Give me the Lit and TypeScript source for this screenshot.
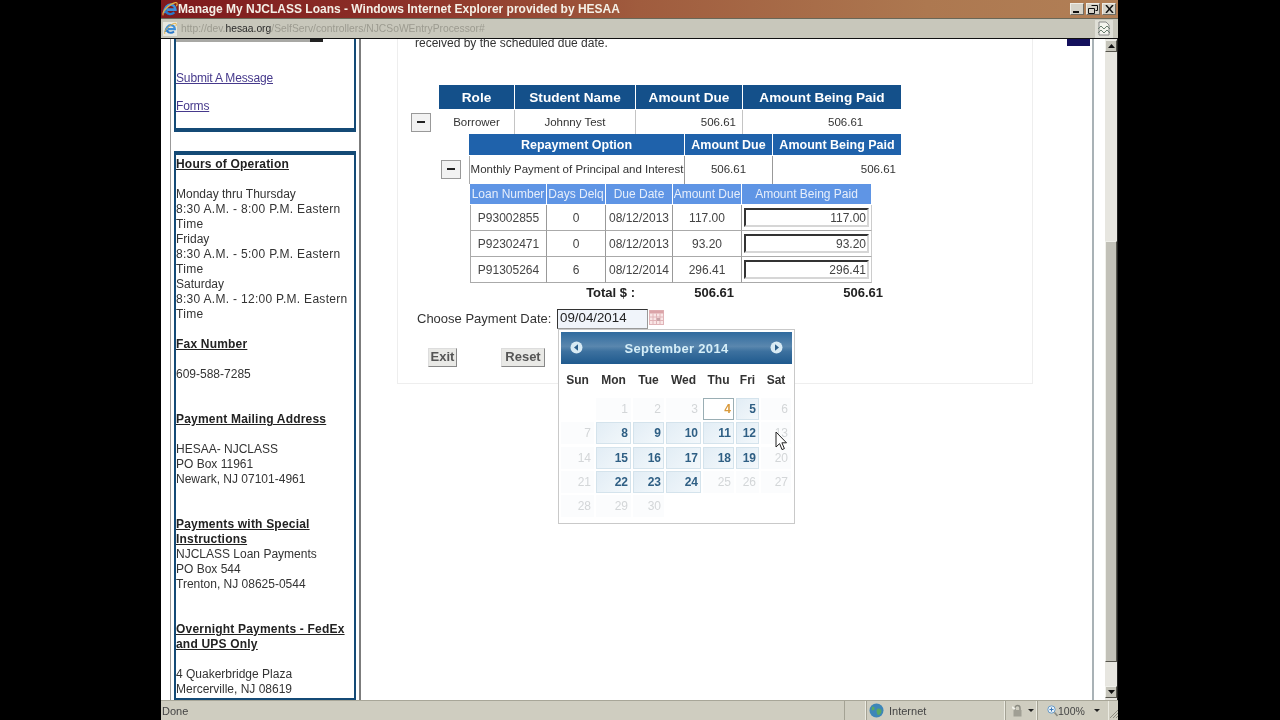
import { LitElement, css, html } from 'lit';
import { customElement } from 'lit/decorators.js';

const LOANS = [
  { no: 'P93002855', days: '0', date: '08/12/2013', due: '117.00' },
  { no: 'P92302471', days: '0', date: '08/12/2013', due: '93.20' },
  { no: 'P91305264', days: '6', date: '08/12/2014', due: '296.41' },
];

// off = greyed out day
const DAYS: { d: number; off?: boolean; today?: boolean }[] = [];
for (let d = 1; d <= 30; d++) {
  const open = d === 4 || d === 5 || (d >= 8 && d <= 12) || (d >= 15 && d <= 19) || (d >= 22 && d <= 24);
  DAYS.push({ d, off: !open, today: d === 4 });
}

const ieLogo = (size: number) => html`
  <svg width=${size} height=${size} viewBox="0 0 16 16">
    <path d="M3 11.5C3 6.5 6.5 3.5 9 3.5s4.5 2 4.5 4.7H5.2" fill="none" stroke="#3f8fd8" stroke-width="2.6"/>
    <path d="M5 9c0 3.4 4.6 4.4 7.6 1.8" fill="none" stroke="#2b78c8" stroke-width="2.2"/>
    <path d="M2 13.5C.6 10 8 2.5 13.5 1.5c2.2-.4 2 1.7 1 3.4" fill="none" stroke="#e8b040" stroke-width="1.1"/>
  </svg>
`;

@customElement('app-root')
export class AppRoot extends LitElement {
  static override styles = css`
    :host {
      display: block;
      width: 1280px;
      height: 720px;
      background: #000;
      overflow: hidden;
      font-family: 'Liberation Sans', Arial, sans-serif;
      font-size: 12px;
      color: #333;
    }
    .window {
      width: 957px;
      height: 720px;
      margin-left: 161px;
      display: flex;
      flex-direction: column;
      background: #fff;
      filter: blur(0.3px);
    }

    /* title bar */
    .title {
      height: 18px;
      display: flex;
      align-items: center;
      background: linear-gradient(90deg, #7e1a1c 0%, #8c3028 25%, #a05c3e 50%, #ad7850 80%, #b17f56 100%);
      color: #f4efe6;
      font-weight: bold;
      font-size: 12px;
      white-space: nowrap;
    }
    .title .logo {
      width: 17px;
      height: 17px;
      display: flex;
    }
    .title .caption {
      flex: 1;
    }
    .winbtn {
      width: 14px;
      height: 12px;
      margin-right: 2px;
      background: #d6d3c9;
      border: 1px solid;
      border-color: #eeece6 #6f6d64 #6f6d64 #eeece6;
      box-sizing: border-box;
      display: flex;
      align-items: center;
      justify-content: center;
    }

    /* address bar */
    .address {
      height: 21px;
      box-sizing: border-box;
      display: flex;
      align-items: center;
      background: #c8c7bb;
      border-top: 1px solid #6a6858;
      border-bottom: 1px solid #111;
      font-size: 10.3px;
      color: #9c9b90;
      white-space: nowrap;
    }
    .address .fav {
      width: 14px;
      height: 14px;
      margin: 0 4px 0 2px;
      background: #e8e8e0;
      display: flex;
    }
    .address b {
      font-weight: normal;
      color: #2a2a2a;
    }
    .address .url {
      flex: 1;
    }
    .address .compat {
      width: 18px;
      height: 18px;
      margin-right: 5px;
      background: #dfdfd6;
      display: flex;
      align-items: center;
      justify-content: center;
    }

    /* page area */
    .page {
      flex: 1;
      min-height: 0;
      display: flex;
      background: #fff;
      overflow: hidden;
    }
    .side {
      width: 200px;
      box-sizing: border-box;
      padding-left: 13px;
      border-right: 2px solid #7c7c7c;
      position: relative;
      flex: none;
    }
    .side .rule {
      position: absolute;
      left: 9px;
      top: 0;
      bottom: 0;
      width: 1px;
      background: #999;
    }
    .box {
      width: 182px;
      box-sizing: border-box;
      border: 2px solid #144a76;
      line-height: 15px;
      color: #333;
    }
    .box.first {
      height: 93px;
      border-top: 0;
      border-bottom-width: 4px;
    }
    .box.second {
      margin-top: 19px;
      height: 549px;
      border-top-width: 4px;
      border-bottom-width: 2px;
      padding-top: 2px;
      overflow: hidden;
    }
    .cutoff {
      display: flex;
      height: 3px;
      margin-bottom: 29px;
    }
    .cutoff i {
      width: 134px;
      background: #a8a8a4;
    }
    .cutoff u {
      width: 13px;
      background: #222;
    }
    .box a {
      color: #46398c;
      text-decoration: underline;
      display: block;
      margin-bottom: 13px;
      letter-spacing: -0.15px;
    }
    .box h4 {
      margin: 0;
      font-size: 12px;
      line-height: 15px;
      font-weight: bold;
      text-decoration: underline;
      letter-spacing: 0.2px;
      color: #222;
    }
    .box p {
      margin: 0;
    }
    .box p.hours {
      letter-spacing: 0.3px;
    }
    .box .gap1 {
      margin-top: 15px;
    }
    .box .gap2 {
      margin-top: 30px;
    }

    .main {
      flex: 1;
      display: flex;
      align-items: flex-start;
      padding-left: 36px;
      min-width: 0;
    }
    .panel {
      width: 636px;
      height: 345px;
      box-sizing: border-box;
      border: 1px solid #eeeeee;
      border-top: 0;
      position: relative;
      flex: none;
    }
    .lead {
      margin: -3px 0 0 17px;
      line-height: 15px;
      height: 15px;
      color: #333;
    }
    .navy {
      width: 23px;
      height: 7px;
      margin-left: 34px;
      background: #14105c;
      flex: none;
    }
    .vline {
      width: 2px;
      align-self: stretch;
      margin-left: 2px;
      background: #a9b2b6;
      flex: none;
    }

    /* nested tables */
    table {
      border-spacing: 0;
      table-layout: fixed;
      border-collapse: separate;
    }
    th,
    td {
      padding: 0;
      box-sizing: border-box;
      text-align: center;
      white-space: nowrap;
    }
    th {
      color: #fff;
      border-right: 1px solid #fff;
      border-bottom: 1px solid #fff;
    }
    td {
      color: #333;
      border-right: 1px solid #c4c4c4;
    }
    td.num {
      text-align: right;
      padding-right: 6px;
    }
    .minus {
      width: 20px;
      height: 19px;
      box-sizing: border-box;
      border: 1px solid #999;
      background: #f2f2f2;
      display: flex;
      align-items: center;
      justify-content: center;
    }
    .minus i {
      width: 8px;
      height: 2px;
      background: #222;
    }
    .t1 {
      margin: 34px 0 0 13px;
      width: 491px;
    }
    .t1 th {
      height: 25px;
      background: #14508a;
      font-size: 13.6px;
    }
    .t1 td {
      height: 24px;
      font-size: 11.5px;
    }
    .t1 td.paid {
      border-right: 0;
      text-align: left;
      padding-left: 85px;
    }
    .t2 {
      margin-left: 43px;
      width: 461px;
    }
    .t2 th {
      height: 22px;
      background: #1f62ab;
      font-size: 12.5px;
    }
    .t2 td {
      height: 28px;
      padding-bottom: 2px;
      font-size: 11.5px;
      border-right-color: #999;
    }
    .t2 td.first {
      border-left: 1px solid #aaa;
    }
    .t2 td.last {
      border-right: 0;
    }
    table th.blank,
    table td.tool {
      background: none;
      border: 0;
    }
    .t3 {
      margin-left: 72px;
      width: 402px;
    }
    .t3 th {
      height: 21px;
      background: #5f95e5;
      font-weight: normal;
      color: #e6eefb;
    }
    .t3 td {
      height: 26px;
      color: #444;
      border-right: 1px solid #999;
      border-bottom: 1px solid #aaa;
    }
    .t3 td:first-child {
      border-left: 1px solid #aaa;
    }
    .t3 td:last-child {
      border-right-color: #ccc;
      padding: 0 2px;
    }
    .amount {
      display: block;
      width: 125px;
      height: 19px;
      line-height: 16px;
      box-sizing: border-box;
      border: 2px solid;
      border-color: #333 #d6d6d6 #d6d6d6 #333;
      text-align: right;
      padding-right: 1px;
      color: #444;
      background: #fff;
    }
    .totals {
      display: grid;
      grid-template-columns: 237px 99px 149px;
      height: 20px;
      line-height: 20px;
      font-size: 13px;
      font-weight: bold;
      text-align: right;
      color: #222;
    }
    .choose {
      display: flex;
      align-items: center;
      margin: 6px 0 0 19px;
      height: 20px;
      font-size: 13px;
      color: #333;
    }
    .choose label {
      width: 140px;
      margin-top: -2px;
    }
    .date {
      width: 91px;
      height: 20px;
      line-height: 16px;
      box-sizing: border-box;
      border: 1px solid;
      border-color: #333 #999 #999 #333;
      background: #f0f4fa;
      padding-left: 2px;
      font-size: 13.3px;
      color: #222;
    }
    .calicon {
      display: flex;
      margin: -3px 0 0 1px;
    }
    .actions {
      display: flex;
      margin: 19px 0 0 30px;
    }
    .btn {
      height: 19px;
      line-height: 16px;
      box-sizing: border-box;
      text-align: center;
      font-size: 13px;
      font-weight: bold;
      color: #555;
      background: #e9e9e6;
      border: 1px solid;
      border-color: #ddd #888 #888 #ddd;
    }
    .btn.exit {
      width: 29px;
    }
    .btn.reset {
      width: 44px;
      margin-left: 44px;
    }

    /* datepicker popup */
    .popup {
      position: absolute;
      left: 160px;
      top: 290px;
      width: 237px;
      height: 195px;
      box-sizing: border-box;
      padding: 2px;
      border: 1px solid #c9c9c9;
      background: #fff;
    }
    .cal-head {
      height: 32px;
      display: flex;
      align-items: center;
      justify-content: space-between;
      padding: 0 9px;
      background: linear-gradient(180deg, #2f6a9e 0%, #5a87ae 45%, #3d719f 60%, #1f5a8e 100%);
      color: #d5eef8;
      font-size: 13px;
      font-weight: bold;
      letter-spacing: 0.3px;
    }
    .cal-head svg {
      display: block;
      margin-top: -2px;
    }
    .cal-grid {
      display: grid;
      grid-template-columns: 33px 35px 31px 35px 31px 23px 30px;
      column-gap: 2px;
      row-gap: 2.3px;
    }
    .dow {
      height: 19px;
      margin: 7px 0 8px;
      line-height: 19px;
      text-align: center;
      font-weight: bold;
      color: #333;
    }
    .cell {
      height: 22px;
      line-height: 20px;
      box-sizing: border-box;
      border: 1px solid transparent;
      text-align: right;
      padding-right: 2px;
      font-weight: bold;
    }
    .cell.off {
      background: #fbfcfd;
      color: #d3d6d8;
      font-weight: normal;
    }
    .cell.open {
      background: linear-gradient(135deg, #e2edf5, #f3f8fb);
      border-color: #d4e3ec;
      color: #2f5f84;
    }
    .cell.today {
      background: #fff;
      border-color: #9aaeb4;
      color: #d99a3c;
    }
    .cursor {
      position: absolute;
      left: 377px;
      top: 392px;
      display: block;
    }

    /* scrollbar */
    .scroll {
      width: 13px;
      margin-left: 11px;
      flex: none;
      align-self: stretch;
      display: flex;
      flex-direction: column;
      background: #e7e6e0;
      border-right: 1px solid #222;
      box-sizing: border-box;
    }
    .arrow {
      height: 12px;
      margin-top: 1px;
      box-sizing: border-box;
      background: #c6c5bb;
      border: 1px solid;
      border-color: #f0f0ea #55544c #55544c #f0f0ea;
      display: flex;
      align-items: center;
      justify-content: center;
    }
    .arrow.down {
      margin-top: auto;
      margin-bottom: 2px;
    }
    .thumb {
      height: 421px;
      margin-top: 189px;
      box-sizing: border-box;
      background: #c2c1b8;
      border: 1px solid;
      border-color: #f0f0ea #55544c #55544c #f0f0ea;
    }

    /* status bar */
    .status {
      height: 20px;
      box-sizing: border-box;
      display: flex;
      align-items: center;
      background: #cfcdc0;
      border-top: 1px solid #a8a698;
      font-size: 11px;
      color: #444;
      white-space: nowrap;
    }
    .status .done {
      width: 682px;
      padding-left: 1px;
    }
    .pane {
      height: 19px;
      box-sizing: border-box;
      display: flex;
      align-items: center;
      border-left: 1px solid #a4a294;
      border-right: 1px solid #ecebe2;
    }
    .pane.blank {
      width: 22px;
    }
    .pane.zone {
      width: 139px;
      padding-left: 2px;
      gap: 5px;
    }
    .pane.lock {
      width: 32px;
      padding-left: 6px;
      gap: 5px;
    }
    .pane.zoom {
      width: 72px;
      padding-left: 9px;
      font-size: 10.5px;
    }
    .pane.zoom .drop {
      margin-left: 9px;
    }
    .drop {
      width: 0;
      height: 0;
      border: 3px solid transparent;
      border-top: 3px solid #222;
      border-bottom: 0;
    }
    .grip {
      display: flex;
      margin-left: auto;
    }
  `;

  private minus() {
    return html`<div class="minus"><i></i></div>`;
  }

  private sidebar() {
    return html`
      <div class="side">
        <div class="rule"></div>
        <div class="box first">
          <div class="cutoff"><i></i><u></u></div>
          <a>Submit A Message</a>
          <a>Forms</a>
        </div>
        <div class="box second">
          <h4>Hours of Operation</h4>
          <p class="gap1">Monday thru Thursday</p>
          <p class="hours">8:30 A.M. - 8:00 P.M. Eastern Time</p>
          <p>Friday</p>
          <p class="hours">8:30 A.M. - 5:00 P.M. Eastern Time</p>
          <p>Saturday</p>
          <p class="hours">8:30 A.M. - 12:00 P.M. Eastern Time</p>
          <h4 class="gap1">Fax Number</h4>
          <p class="gap1">609-588-7285</p>
          <h4 class="gap2">Payment Mailing Address</h4>
          <p class="gap1">HESAA- NJCLASS</p>
          <p>PO Box 11961</p>
          <p>Newark, NJ 07101-4961</p>
          <h4 class="gap2">Payments with Special Instructions</h4>
          <p>NJCLASS Loan Payments</p>
          <p>PO Box 544</p>
          <p>Trenton, NJ 08625-0544</p>
          <h4 class="gap2">Overnight Payments - FedEx and UPS Only</h4>
          <p class="gap1">4 Quakerbridge Plaza</p>
          <p>Mercerville, NJ 08619</p>
        </div>
      </div>
    `;
  }

  private tables() {
    return html`
      <table class="t1">
        <colgroup><col width="28" /><col width="76" /><col width="121" /><col width="107" /><col width="159" /></colgroup>
        <tr><th class="blank"></th><th>Role</th><th>Student Name</th><th>Amount Due</th><th>Amount Being Paid</th></tr>
        <tr>
          <td class="tool">${this.minus()}</td>
          <td>Borrower</td>
          <td>Johnny Test</td>
          <td class="num">506.61</td>
          <td class="paid">506.61</td>
        </tr>
      </table>
      <table class="t2">
        <colgroup><col width="28" /><col width="216" /><col width="88" /><col width="129" /></colgroup>
        <tr><th class="blank"></th><th>Repayment Option</th><th>Amount Due</th><th>Amount Being Paid</th></tr>
        <tr>
          <td class="tool">${this.minus()}</td>
          <td class="first">Monthly Payment of Principal and Interest</td>
          <td>506.61</td>
          <td class="num last">506.61</td>
        </tr>
      </table>
      <table class="t3">
        <colgroup><col width="77" /><col width="59" /><col width="67" /><col width="69" /><col width="130" /></colgroup>
        <tr><th>Loan Number</th><th>Days Delq</th><th>Due Date</th><th>Amount Due</th><th>Amount Being Paid</th></tr>
        ${LOANS.map(
          (l) => html`
            <tr>
              <td>${l.no}</td>
              <td>${l.days}</td>
              <td>${l.date}</td>
              <td>${l.due}</td>
              <td><span class="amount">${l.due}</span></td>
            </tr>
          `,
        )}
      </table>
      <div class="totals"><span>Total $ :</span><span>506.61</span><span>506.61</span></div>
    `;
  }

  private calendar() {
    const names = ['Sun', 'Mon', 'Tue', 'Wed', 'Thu', 'Fri', 'Sat'];
    const nav = (d: string) => html`
      <svg width="13" height="13" viewBox="0 0 13 13">
        <circle cx="6.5" cy="6.5" r="6" fill="#d8eaf4" />
        <path d=${d} fill="#2c5f8c" />
      </svg>
    `;
    return html`
      <div class="popup">
        <div class="cal-head">
          ${nav('M8 3.2v6.6L4 6.5z')}
          <span>September 2014</span>
          ${nav('M5 3.2v6.6l4-3.3z')}
        </div>
        <div class="cal-grid">
          ${names.map((n) => html`<div class="dow">${n}</div>`)}
        </div>
        <div class="cal-grid">
          <div></div>
          ${DAYS.map(
            (c) => html`<div class="cell ${c.off ? 'off' : 'open'} ${c.today ? 'today' : ''}">${c.d}</div>`,
          )}
        </div>
      </div>
      <svg class="cursor" width="12" height="20" viewBox="0 0 12 20">
        <path d="M1 1v15l3.6-3.4 2.4 6 2.4-1-2.5-5.8h4.6z" fill="#fff" stroke="#222" stroke-width="1" />
      </svg>
    `;
  }

  override render() {
    return html`
      <div class="window">
        <div class="title">
          <span class="logo">${ieLogo(17)}</span>
          <span class="caption">Manage My NJCLASS Loans - Windows Internet Explorer provided by HESAA</span>
          <span class="winbtn"><svg width="10" height="8"><rect x="1" y="6" width="6" height="2" fill="#111" /></svg></span>
          <span class="winbtn"><svg width="10" height="9"><path d="M3.5.5h6v5h-2M.5 3.5h6v5h-6z" fill="none" stroke="#111" /></svg></span>
          <span class="winbtn"><svg width="9" height="8"><path d="M1 0l7 8M8 0l-7 8" stroke="#111" stroke-width="1.5" /></svg></span>
        </div>
        <div class="address">
          <span class="fav">${ieLogo(14)}</span>
          <span class="url">http://dev.<b>hesaa.org</b>/SelfServ/controllers/NJCSoWEntryProcessor#</span>
          <span class="compat">
            <svg width="14" height="15" viewBox="0 0 14 15">
              <path d="M2 1h7l3 3v10H2z" fill="#f4f4ee" stroke="#888" />
              <path d="M1 8l3-3 3 3 3-3 3 3M1 12l3-3 3 3 3-3 3 3" fill="none" stroke="#6b7f70" />
            </svg>
          </span>
        </div>
        <div class="page">
          ${this.sidebar()}
          <div class="main">
            <div class="panel">
              <div class="lead">received by the scheduled due date.</div>
              ${this.tables()}
              <div class="choose">
                <label>Choose Payment Date:</label>
                <div class="date">09/04/2014</div>
                <span class="calicon">
                  <svg width="15" height="15" viewBox="0 0 15 15">
                    <rect x="0.5" y="0.5" width="14" height="14" fill="#f9e6e6" stroke="#e0b4b8" />
                    <rect x="0.5" y="0.5" width="14" height="3" fill="#dba4a8" />
                    <path d="M.5 7h14M.5 10.5h14M4 3.5v11M7.5 3.5v11M11 3.5v11" stroke="#e0b4b8" fill="none" />
                    <rect x="8" y="8" width="3" height="3" fill="#c8a4a8" />
                  </svg>
                </span>
              </div>
              <div class="actions">
                <div class="btn exit">Exit</div>
                <div class="btn reset">Reset</div>
              </div>
              ${this.calendar()}
            </div>
            <div class="navy"></div>
            <div class="vline"></div>
            <div class="scroll">
              <div class="arrow"><svg width="7" height="4"><path d="M3.5 0L7 4H0z" fill="#111" /></svg></div>
              <div class="thumb"></div>
              <div class="arrow down"><svg width="7" height="4"><path d="M0 0h7L3.5 4z" fill="#111" /></svg></div>
            </div>
          </div>
        </div>
        <div class="status">
          <span class="done">Done</span>
          <span class="pane blank"></span>
          <span class="pane zone">
            <svg width="15" height="15" viewBox="0 0 15 15">
              <circle cx="7.5" cy="7.5" r="7" fill="#3d86b8" />
              <path d="M3 3.5c2 0 3 1 2.6 2.6S3 8 2.5 6.5zM8 6c2-1 4.5 0 4.5 2.2S10 12.5 9 12 7 7.5 8 6z" fill="#5aa860" />
            </svg>
            Internet
          </span>
          <span class="pane lock">
            <svg width="11" height="13" viewBox="0 0 11 13">
              <path d="M3 6V4a2.5 2.5 0 0 1 5 0v2" fill="none" stroke="#8a8a80" stroke-width="1.4" />
              <rect x="1.5" y="6" width="8" height="6.5" fill="#a09f94" />
              <path d="M0 3l3 2" stroke="#f2f2ea" stroke-width="2" />
            </svg>
            <i class="drop"></i>
          </span>
          <span class="pane zoom">
            <svg width="11" height="12" viewBox="0 0 11 12">
              <circle cx="4.5" cy="4.5" r="3.7" fill="#e6f0f8" stroke="#6a9cc8" />
              <path d="M2.5 4.5h4M4.5 2.5v4" stroke="#3a78b8" />
              <path d="M7.5 7.5l3 3.5" stroke="#8a8a80" stroke-width="1.6" />
            </svg>
            100%
            <i class="drop"></i>
          </span>
          <svg class="grip" width="9" height="16" viewBox="0 0 9 16">
            <path d="M1 15l8-8M4 15l5-5M7 15l2-2" stroke="#8f8d80" fill="none" />
          </svg>
        </div>
      </div>
    `;
  }
}

declare global {
  interface HTMLElementTagNameMap {
    'app-root': AppRoot;
  }
}
